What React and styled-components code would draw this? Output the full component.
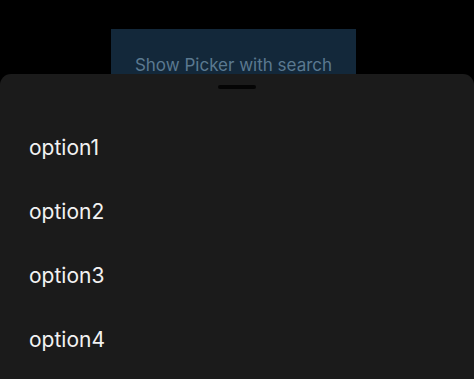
import React from 'react'
import styled, { createGlobalStyle } from 'styled-components'

const Global = createGlobalStyle`
  html, body {
    margin: 0;
    padding: 0;
    background: #000;
    height: 100%;
    overflow: hidden;
  }
  #root {
    height: 100%;
  }
`

const Screen = styled.div`
  height: 379px;
  display: flex;
  flex-direction: column;
  align-items: center;
  padding-top: 29px;
  box-sizing: border-box;
  font-family: Inter, 'Noto Sans', sans-serif;
`

const PickerButton = styled.button`
  width: 245px;
  height: 56px;
  margin: 0 7px 0 0;
  border: none;
  background: #13283a;
  color: #5b7990;
  font-family: inherit;
  font-size: 17px;
  padding: 0 0 10px;
  display: flex;
  align-items: flex-end;
  justify-content: center;
  flex-shrink: 0;
`

const Sheet = styled.div`
  margin-top: -11px;
  align-self: stretch;
  flex: 1;
  background: #1b1b1b;
  border-radius: 11px 11px 0 0;
  display: flex;
  flex-direction: column;
  position: relative;
  z-index: 1;
`

const Handle = styled.div`
  width: 38px;
  height: 4px;
  border-radius: 2px;
  background: #050505;
  margin: 11px auto 0;
`

const OptionList = styled.ul`
  list-style: none;
  margin: 0;
  padding: 26px 0 0;
  display: flex;
  flex-direction: column;
`

const Option = styled.li`
  height: 64px;
  display: flex;
  align-items: center;
  padding-left: 29px;
  color: #f2f2f2;
  font-size: 21px;
`

const options = ['option1', 'option2', 'option3', 'option4']

const App = () => {
  return (
    <>
      <Global />
      <Screen>
        <PickerButton>Show Picker with search</PickerButton>
        <Sheet>
          <Handle />
          <OptionList>
            {options.map((o) => (
              <Option key={o}>{o}</Option>
            ))}
          </OptionList>
        </Sheet>
      </Screen>
    </>
  )
}

export default App
